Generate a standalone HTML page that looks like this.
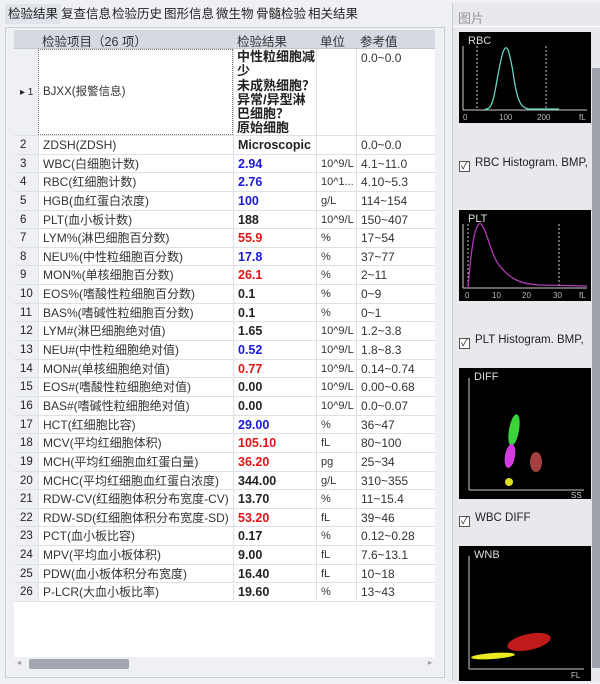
<!DOCTYPE html>
<html><head><meta charset="utf-8"><style>
*{margin:0;padding:0;box-sizing:border-box}
body{width:600px;height:681px;overflow:hidden;background:#eef0f4;font-family:"Liberation Sans","Noto Sans CJK SC",sans-serif;font-size:12px;color:#222;position:relative}
.tabs{position:absolute;left:0;top:4px;height:20px;font-size:12.5px;color:#222}
.tabs span{position:absolute;top:0;white-space:nowrap;line-height:20px}
.tabs .on{background:#dfe3ea;padding:0 3px;left:5px}
.lp{position:absolute;left:5px;top:27px;width:440px;height:651px;border:1px solid #c9ccd3;background:#eef0f4}
.tbl{position:absolute;left:14px;top:30px;width:421px;height:627px;background:#fff}
.hdr{position:absolute;left:0;top:0;width:421px;height:19px;background:#d5d9e2;border-bottom:1px solid #c3c7cf}
.hdr span{position:absolute;top:1px;font-size:12.5px;color:#333}
.row{position:absolute;left:0;width:421px;border-bottom:1px solid #dde0e6}
.row div{position:absolute;top:0;height:100%;white-space:nowrap;line-height:18px;overflow:hidden}
.n{left:0;width:24px;background:#eef0f4;padding-left:6px;font-size:11.5px}
.i{left:24px;width:195px;padding-left:4px;border-left:1px solid #dde0e6;font-size:12px;color:#333}
.r{left:219px;width:83px;padding-left:4px;border-left:1px solid #dde0e6;font-weight:bold;font-size:12.5px}
.u{left:302px;width:40px;padding-left:4px;border-left:1px solid #dde0e6;font-size:11px;color:#333}
.f{left:342px;width:79px;padding-left:4px;border-left:1px solid #dde0e6;font-size:12px;color:#333}
.b{color:#1a1ad0}.d{color:#e01515}
.hs{position:absolute;left:14px;top:657px;width:421px;height:14px;background:#eef0f4}
.rp{position:absolute;left:452px;top:3px;width:148px;height:678px;background:#e8e9ed;border-left:1px solid #c9ccd3}
.rh{position:absolute;left:0;top:0;width:148px;height:24px;border-bottom:1px solid #fff;color:#999;font-size:13px;padding:5px 5px}
.img{position:absolute;left:6px;width:132px;background:#000}
.cb{position:absolute;left:6px;font-size:11.5px;color:#222;white-space:nowrap}
.cb i{display:inline-block;width:11px;height:11px;border:1px solid #555;background:#fff;vertical-align:-3px;margin-right:5px;font-style:normal;font-size:10px;line-height:9px;text-align:center}
</style></head><body>
<div class="tabs">
<span class="on">检验结果</span><span style="left:61px">复查信息</span><span style="left:112px">检验历史</span><span style="left:164px">图形信息</span><span style="left:216px">微生物</span><span style="left:256px">骨髓检验</span><span style="left:308px">相关结果</span>
</div>
<div class="lp"></div>
<div class="tbl">
<div class="hdr"><span style="left:28px">检验项目（26 项）</span><span style="left:223px">检验结果</span><span style="left:306px">单位</span><span style="left:346px">参考值</span></div>
<div class="row" style="top:19px;height:87px"><div class="n" style="line-height:87px;font-size:10px">▸ 1</div><div class="i" style="line-height:85px;border:1px dotted #777;font-size:11.5px">BJXX(报警信息)</div><div class="r" style="line-height:14.3px;padding-top:1px;padding-left:3px;white-space:normal;font-size:13px;word-break:break-all">中性粒细胞减少<br>未成熟细胞？<br>异常/异型淋巴细胞？<br>原始细胞</div><div class="u"></div><div class="f">0.0~0.0</div></div>
<div id="rows"></div>
</div>
<div class="hs"><div style="position:absolute;left:15px;top:2px;width:100px;height:10px;background:#a3a7b0;border-radius:2px"></div><span style="position:absolute;left:3px;top:1px;font-size:8px;color:#999">◂</span><span style="position:absolute;right:3px;top:1px;font-size:8px;color:#999">▸</span></div>

<div class="rp">
<div class="rh">图片</div>
<div style="position:absolute;right:0;top:24px;width:9px;height:654px;background:#e8e9ed"><div style="position:absolute;left:1px;top:41px;width:8px;height:600px;background:#9ea3ac"></div></div>
<div class="img" style="top:29px;height:91px">
<svg width="132" height="91"><line x1="4" y1="14" x2="4" y2="78" stroke="#ccc"/><line x1="4" y1="78" x2="128" y2="78" stroke="#ccc"/>
<line x1="18" y1="14" x2="18" y2="78" stroke="#ccc" stroke-dasharray="2 2"/><line x1="87" y1="14" x2="87" y2="78" stroke="#ccc" stroke-dasharray="2 2"/>
<path d="M25 78 L30 76 C36 72 38 40 44 20 C48 10 50 18 54 40 C58 70 62 76 70 77 L100 77" stroke="#5fd6c0" fill="none" stroke-width="1.3"/>
<text x="4" y="88" fill="#bbb" font-size="8">0</text><text x="40" y="88" fill="#bbb" font-size="8">100</text><text x="78" y="88" fill="#bbb" font-size="8">200</text><text x="120" y="88" fill="#bbb" font-size="8">fL</text>
<text x="9" y="12" fill="#ddd" font-size="11" font-family="Liberation Sans">RBC</text></svg></div>
<div class="cb" style="top:154px"><i>✓</i>RBC Histogram. BMP,</div>
<div class="img" style="top:207px;height:91px">
<svg width="132" height="91"><line x1="4" y1="14" x2="4" y2="78" stroke="#ccc"/><line x1="4" y1="78" x2="128" y2="78" stroke="#ccc"/>
<line x1="9" y1="14" x2="9" y2="78" stroke="#ccc" stroke-dasharray="2 2"/><line x1="100" y1="14" x2="100" y2="78" stroke="#ccc" stroke-dasharray="2 2"/>
<path d="M9 78 C12 40 16 10 22 14 C28 20 32 45 40 55 C50 68 60 74 80 75 L128 76" stroke="#b03ab8" fill="none" stroke-width="1.3"/>
<text x="6" y="88" fill="#bbb" font-size="8">0</text><text x="33" y="88" fill="#bbb" font-size="8">10</text><text x="63" y="88" fill="#bbb" font-size="8">20</text><text x="94" y="88" fill="#bbb" font-size="8">30</text><text x="120" y="88" fill="#bbb" font-size="8">fL</text>
<text x="9" y="12" fill="#ddd" font-size="11" font-family="Liberation Sans">PLT</text></svg></div>
<div class="cb" style="top:331px"><i>✓</i>PLT Histogram. BMP,</div>
<div class="img" style="top:365px;height:131px">
<svg width="132" height="131"><line x1="10" y1="10" x2="10" y2="122" stroke="#ccc"/><line x1="10" y1="122" x2="125" y2="122" stroke="#ccc"/>
<ellipse cx="55" cy="62" rx="5" ry="16" fill="#3bd43b" transform="rotate(10 55 62)"/><ellipse cx="51" cy="88" rx="5" ry="12" fill="#d33be0" transform="rotate(10 51 88)"/>
<ellipse cx="77" cy="94" rx="6" ry="10" fill="#d05050" opacity=".8"/><ellipse cx="50" cy="114" rx="4" ry="4" fill="#e0e020"/>
<text x="15" y="12" fill="#ddd" font-size="11">DIFF</text><text x="112" y="130" fill="#ccc" font-size="8">SS</text></svg></div>
<div class="cb" style="top:509px"><i>✓</i>WBC DIFF</div>
<div class="img" style="top:543px;height:135px">
<svg width="132" height="135"><line x1="10" y1="10" x2="10" y2="123" stroke="#ccc"/><line x1="10" y1="123" x2="125" y2="123" stroke="#ccc"/>
<ellipse cx="70" cy="96" rx="22" ry="8" fill="#e02020" opacity=".85" transform="rotate(-12 70 96)"/><ellipse cx="34" cy="110" rx="22" ry="3" fill="#eaea20" transform="rotate(-4 34 110)"/>
<text x="15" y="12" fill="#ddd" font-size="11">WNB</text><text x="112" y="132" fill="#ccc" font-size="8">FL</text></svg></div>
</div>
<script>
var d=[["2","ZDSH(ZDSH)","Microscopic","","","0.0~0.0"],["3","WBC(白细胞计数)","2.94","b","10^9/L","4.1~11.0"],["4","RBC(红细胞计数)","2.76","b","10^1...","4.10~5.3"],["5","HGB(血红蛋白浓度)","100","b","g/L","114~154"],["6","PLT(血小板计数)","188","","10^9/L","150~407"],["7","LYM%(淋巴细胞百分数)","55.9","d","%","17~54"],["8","NEU%(中性粒细胞百分数)","17.8","b","%","37~77"],["9","MON%(单核细胞百分数)","26.1","d","%","2~11"],["10","EOS%(嗜酸性粒细胞百分数)","0.1","","%","0~9"],["11","BAS%(嗜碱性粒细胞百分数)","0.1","","%","0~1"],["12","LYM#(淋巴细胞绝对值)","1.65","","10^9/L","1.2~3.8"],["13","NEU#(中性粒细胞绝对值)","0.52","b","10^9/L","1.8~8.3"],["14","MON#(单核细胞绝对值)","0.77","d","10^9/L","0.14~0.74"],["15","EOS#(嗜酸性粒细胞绝对值)","0.00","","10^9/L","0.00~0.68"],["16","BAS#(嗜碱性粒细胞绝对值)","0.00","","10^9/L","0.0~0.07"],["17","HCT(红细胞比容)","29.00","b","%","36~47"],["18","MCV(平均红细胞体积)","105.10","d","fL","80~100"],["19","MCH(平均红细胞血红蛋白量)","36.20","d","pg","25~34"],["20","MCHC(平均红细胞血红蛋白浓度)","344.00","","g/L","310~355"],["21","RDW-CV(红细胞体积分布宽度-CV)","13.70","","%","11~15.4"],["22","RDW-SD(红细胞体积分布宽度-SD)","53.20","d","fL","39~46"],["23","PCT(血小板比容)","0.17","","%","0.12~0.28"],["24","MPV(平均血小板体积)","9.00","","fL","7.6~13.1"],["25","PDW(血小板体积分布宽度)","16.40","","fL","10~18"],["26","P-LCR(大血小板比率)","19.60","","%","13~43"]];
var h="";d.forEach(function(r,k){h+='<div class="row" style="top:'+(106+k*18.64)+'px;height:18.64px"><div class="n">'+r[0]+'</div><div class="i">'+r[1]+'</div><div class="r '+r[3]+'">'+r[2]+'</div><div class="u">'+r[4]+'</div><div class="f">'+r[5]+'</div></div>';});
document.getElementById("rows").outerHTML=h;
</script>
</body></html>
